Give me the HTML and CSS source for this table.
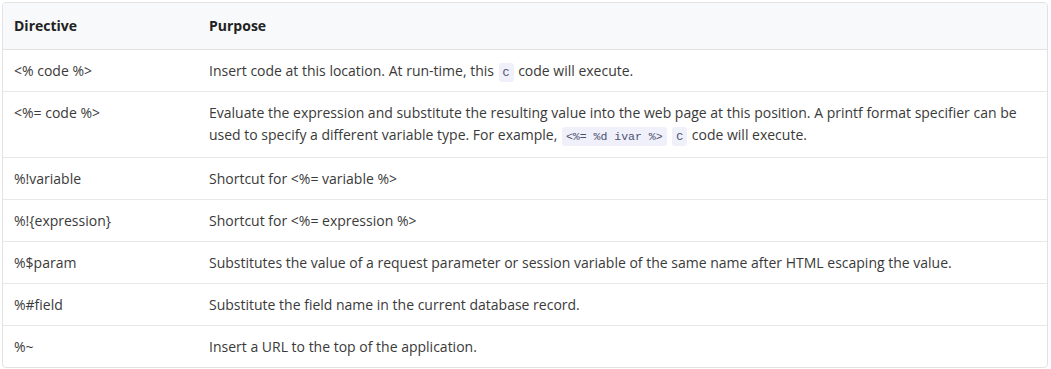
FILE: index.html
```html
<!DOCTYPE html>
<html lang="en">
<head>
  <meta charset="UTF-8">
  <meta name="viewport" content="width=device-width, initial-scale=1.0">
  <title>Directives</title>
  <link rel="stylesheet" href="styles.css">
</head>
<body>
  <div class="table-wrap">
    <table class="directives">
      <thead>
        <tr>
          <th class="col-directive">Directive</th>
          <th>Purpose</th>
        </tr>
      </thead>
      <tbody>
        <tr>
          <td>&lt;% code %&gt;</td>
          <td>Insert code at this location. At run-time, this <code>C</code> code will execute.</td>
        </tr>
        <tr>
          <td>&lt;%= code %&gt;</td>
          <td class="multi">Evaluate the expression and substitute the resulting value into the web page at this position. A printf format specifier can be used to specify a different variable type. For example, <code>&lt;%= %d ivar %&gt;</code> <code>C</code> code will execute.</td>
        </tr>
        <tr>
          <td>%!variable</td>
          <td>Shortcut for &lt;%= variable %&gt;</td>
        </tr>
        <tr>
          <td>%!{expression}</td>
          <td>Shortcut for &lt;%= expression %&gt;</td>
        </tr>
        <tr>
          <td>%$param</td>
          <td>Substitutes the value of a request parameter or session variable of the same name after HTML escaping the value.</td>
        </tr>
        <tr>
          <td>%#field</td>
          <td>Substitute the field name in the current database record.</td>
        </tr>
        <tr>
          <td>%~</td>
          <td>Insert a URL to the top of the application.</td>
        </tr>
      </tbody>
    </table>
  </div>
</body>
</html>
```

FILE: styles.css
```css
body {
  margin: 2px 3px 2px 2px;
  font-family: "Open Sans", Arial, sans-serif;
  font-size: 14px;
  line-height: 21px;
  color: #3a3a3a;
  background: #fff;
}
.table-wrap {
  border: 1px solid #e2e2e2;
  border-radius: 4px;
  overflow: hidden;
}
.directives {
  width: 100%;
  border-collapse: collapse;
}
.directives th {
  text-align: left;
  font-weight: 700;
  color: #222;
  background-color: #f8f9fa;
  padding: 12px 12px 13px;
  border-bottom: 1px solid #e2e2e2;
}
.directives th:first-child {
  padding-left: 11px;
}
.directives td {
  padding: 10px 12px;
  vertical-align: top;
  border-bottom: 1px solid #e8e8e8;
}
.directives td:first-child {
  padding-left: 11px;
}
.directives td.multi {
  line-height: 22px;
  padding-top: 10px;
  padding-bottom: 11px;
}
.directives tr:last-child td {
  border-bottom: none;
}
.col-directive {
  width: 171px;
}
code {
  font-family: "Liberation Mono", "DejaVu Sans Mono", monospace;
  font-size: 11.5px;
  line-height: 12px;
  color: #4a5170;
  background-color: #f0f0fa;
  padding: 3px 4px;
  margin: 0 1px;
  border-radius: 3px;
}
```
